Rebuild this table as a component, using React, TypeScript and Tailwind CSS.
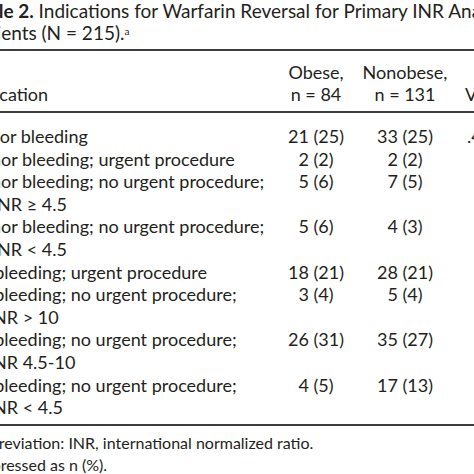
const rows = [
  { label: ['Major bleeding'], obese: '21 (25)', non: '33 (25)', p: '.45' },
  { label: ['Minor bleeding; urgent procedure'], obese: '2 (2)', non: '2 (2)', p: '' },
  { label: ['Minor bleeding; no urgent procedure;', 'INR ≥ 4.5'], obese: '5 (6)', non: '7 (5)', p: '' },
  { label: ['Minor bleeding; no urgent procedure;', 'INR < 4.5'], obese: '5 (6)', non: '4 (3)', p: '' },
  { label: ['No bleeding; urgent procedure'], obese: '18 (21)', non: '28 (21)', p: '' },
  { label: ['No bleeding; no urgent procedure;', 'INR > 10'], obese: '3 (4)', non: '5 (4)', p: '' },
  { label: ['No bleeding; no urgent procedure;', 'INR 4.5-10'], obese: '26 (31)', non: '35 (27)', p: '' },
  { label: ['No bleeding; no urgent procedure;', 'INR < 4.5'], obese: '4 (5)', non: '17 (13)', p: '' },
]

export default function App() {
  return (
    <div className="h-[474px] w-[474px] overflow-hidden bg-white text-[#231f20] font-['Lato','Liberation_Sans',sans-serif]">
      <div className="-ml-[31px] w-[600px]">
        <p className="text-[19px] leading-[22px]">
          <span className="font-bold">Table 2.</span> Indications for Warfarin Reversal for Primary INR Analysis in
          <br />
          Patients (N = 215).<sup className="text-[10px]">a</sup>
        </p>
      </div>

      <div className="mt-[5px] h-[2px] w-full bg-[#3d3d3d]" />

      <div className="-ml-[30px] w-[580px]">
        <div className="mt-[10px] grid grid-cols-[310px_72px_106px_92px] text-[18px] leading-[22px]">
          <div className="flex items-end">Indication</div>
          <div className="text-center">Obese,<br />n = 84</div>
          <div className="text-center">Nonobese,<br />n = 131</div>
          <div className="flex items-end pl-[7px]">Value</div>
        </div>
      </div>

      <div className="mt-[6px] h-[2px] w-full bg-[#3d3d3d]" />

      <div className="-ml-[30px] mt-[12px] w-[580px] text-[18px] leading-[22.6px]">
        {rows.map((r, i) => (
          <div key={i} className="grid grid-cols-[310px_72px_106px_92px]">
            <div className={r.label[0].startsWith('No') ? '-ml-[4px]' : ''}>
              <div>{r.label[0]}</div>
              {r.label[1] && <div className="pl-[22px]">{r.label[1]}</div>}
            </div>
            <div className="text-center">{r.obese}</div>
            <div className="text-center">{r.non}</div>
            <div className="pl-[9px]">{r.p}</div>
          </div>
        ))}
      </div>

      <div className="mt-[5px] h-[2px] w-full bg-[#3d3d3d]" />

      <div className="-ml-[30px] mt-[6px] w-[580px] text-[16px] leading-[22px]">
        <p>Abbreviation: INR, international normalized ratio.</p>
        <p>
          <sup className="text-[9px]">a</sup>Expressed as n (%).
        </p>
      </div>
    </div>
  )
}
